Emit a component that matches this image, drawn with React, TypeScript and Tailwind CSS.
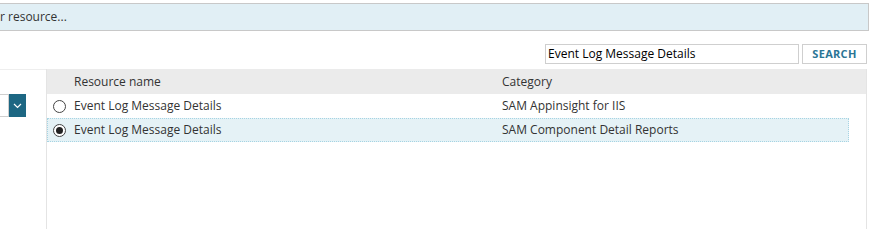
import React from 'react';

const rows = [
  { name: 'Event Log Message Details', category: 'SAM Appinsight for IIS', selected: false },
  { name: 'Event Log Message Details', category: 'SAM Component Detail Reports', selected: true },
];

function Radio({ checked }: { checked: boolean }) {
  return (
    <span className="flex h-[13px] w-[13px] items-center justify-center rounded-full border border-[#444] bg-white">
      {checked && <span className="h-[7px] w-[7px] rounded-full bg-[#222]" />}
    </span>
  );
}

export default function App() {
  return (
    <div className="h-[229px] w-[874px] overflow-hidden bg-white font-['Open_Sans',sans-serif] text-[12px] text-[#333]">
      {/* search bar (scrolled off to the left) */}
      <div className="mt-[3px] flex h-[28px] w-[869px] items-center border border-l-0 border-[#c8c8c8] bg-[#e1eff5] text-[#333]">
        r resource...
      </div>

      {/* search box */}
      <div className="mt-[13px] flex justify-end gap-[3px] pr-[7px]">
        <div className="flex h-[20px] w-[254px] items-center border border-[#cfcfcf] px-[2px] text-black">
          Event Log Message Details
        </div>
        <button className="flex h-[20px] w-[65px] items-center justify-center border border-[#cfcfcf] bg-white text-[11px] font-bold tracking-[0.3px] text-[#2b7595]">
          SEARCH
        </button>
      </div>

      <div className="mt-[5px] flex">
        {/* left column with dropdown */}
        <div className="w-[46px] border-t border-[#eeeeee]">
          <div className="mt-[24px] flex h-[23px]">
            <div className="w-[9px] border border-l-0 border-[#cfcfcf] bg-white" />
            <div className="flex w-[17px] items-center justify-center bg-[#1d6783]">
              <svg width="9" height="6" viewBox="0 0 9 6" fill="none" stroke="white" strokeWidth="1.2">
                <path d="M1 1l3.5 3.5L8 1" />
              </svg>
            </div>
          </div>
        </div>

        {/* results table */}
        <div className="h-[160px] w-[821px] border-x border-[#e4e4e4]">
          <div className="flex h-[25px] items-center bg-[#ebebeb]">
            <div className="w-[455px] pl-[27px]">Resource name</div>
            <div>Category</div>
          </div>
          {rows.map((r, i) => (
            <div
              key={i}
              className={
                r.selected
                  ? 'flex h-[24px] w-[802px] items-center border border-dotted border-[#a6d4e3] bg-[#e5f2f6]'
                  : 'flex h-[24px] w-[802px] items-center border border-transparent'
              }
            >
              <div className="flex w-[454px] items-center gap-[8px] pl-[5px]">
                <Radio checked={r.selected} />
                <span>{r.name}</span>
              </div>
              <div>{r.category}</div>
            </div>
          ))}
        </div>
      </div>
    </div>
  );
}
